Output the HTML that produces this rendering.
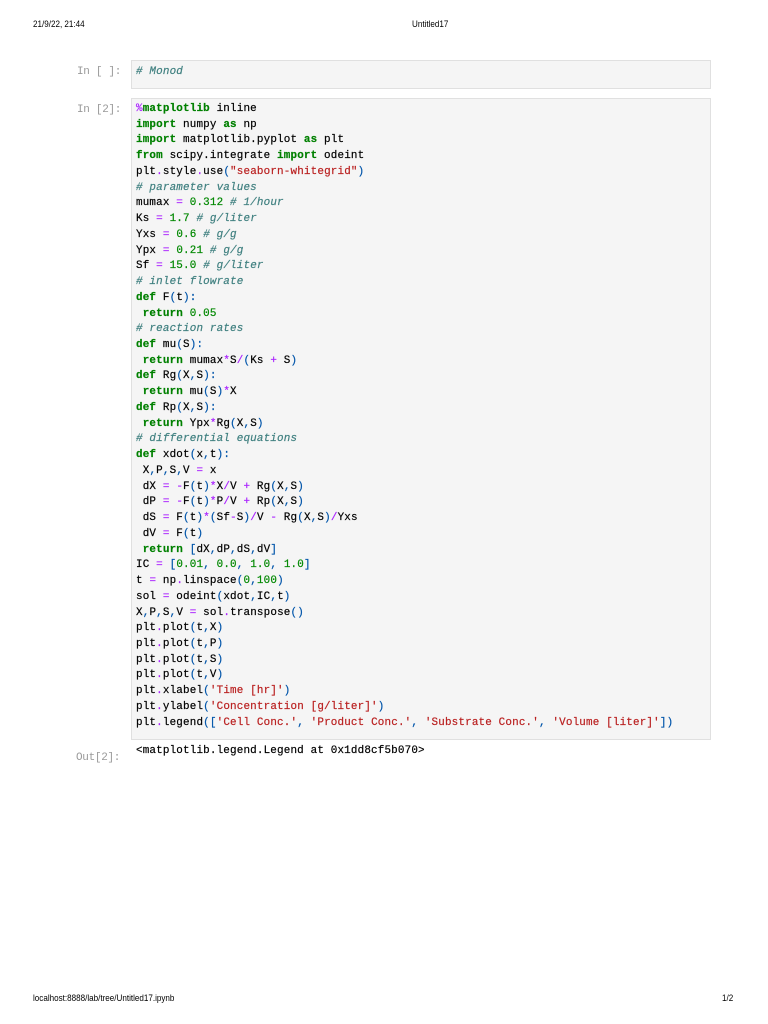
<!DOCTYPE html>
<html><head><meta charset="utf-8"><style>
body{margin:0;width:768px;height:1024px;background:#fff;position:relative;font-family:"Liberation Sans",sans-serif;overflow:hidden}
.hdr{position:absolute;font-size:9.5px;color:#000;transform:scaleX(.85);transform-origin:left}
.box{position:absolute;left:131px;width:578px;background:#f5f5f5;border:1px solid #e0e0e0}
.pr{position:absolute;font-family:"Liberation Mono",monospace;font-size:11px;color:#999;letter-spacing:-0.3px}
pre{margin:0;position:absolute;left:136px;font-family:"Liberation Mono",monospace;font-size:10.9px;letter-spacing:0.18px;line-height:15.74px;color:#000;-webkit-text-stroke:0.2px}
.k{color:#008000;font-weight:bold}.n{color:#008800}.s{color:#BA2121}.c{color:#408080;font-style:italic}.o{color:#AA22FF}.p{color:#0055AA}
</style></head><body>
<div class="hdr" style="left:33px;top:19px">21/9/22, 21:44</div>
<div class="hdr" style="left:412px;top:19px">Untitled17</div>
<div class="box" style="top:60px;height:27px"></div>
<div class="pr" style="left:77px;top:66px">In [ ]:</div>
<pre style="top:65px"><span class="c"># Monod</span></pre>
<div class="box" style="top:98px;height:640px"></div>
<div class="pr" style="left:77px;top:104px">In [2]:</div>
<pre style="top:102px"><span class="o">%</span><span class="k">matplotlib</span> inline
<span class="k">import</span> numpy <span class="k">as</span> np
<span class="k">import</span> matplotlib.pyplot <span class="k">as</span> plt
<span class="k">from</span> scipy.integrate <span class="k">import</span> odeint
plt<span class="o">.</span>style<span class="o">.</span>use<span class="p">(</span><span class="s">"seaborn-whitegrid"</span><span class="p">)</span>
<span class="c"># parameter values</span>
mumax <span class="o">=</span> <span class="n">0.312</span> <span class="c"># 1/hour</span>
Ks <span class="o">=</span> <span class="n">1.7</span> <span class="c"># g/liter</span>
Yxs <span class="o">=</span> <span class="n">0.6</span> <span class="c"># g/g</span>
Ypx <span class="o">=</span> <span class="n">0.21</span> <span class="c"># g/g</span>
Sf <span class="o">=</span> <span class="n">15.0</span> <span class="c"># g/liter</span>
<span class="c"># inlet flowrate</span>
<span class="k">def</span> F<span class="p">(</span>t<span class="p">):</span>
 <span class="k">return</span> <span class="n">0.05</span>
<span class="c"># reaction rates</span>
<span class="k">def</span> mu<span class="p">(</span>S<span class="p">):</span>
 <span class="k">return</span> mumax<span class="o">*</span>S<span class="o">/</span><span class="p">(</span>Ks <span class="o">+</span> S<span class="p">)</span>
<span class="k">def</span> Rg<span class="p">(</span>X<span class="p">,</span>S<span class="p">):</span>
 <span class="k">return</span> mu<span class="p">(</span>S<span class="p">)</span><span class="o">*</span>X
<span class="k">def</span> Rp<span class="p">(</span>X<span class="p">,</span>S<span class="p">):</span>
 <span class="k">return</span> Ypx<span class="o">*</span>Rg<span class="p">(</span>X<span class="p">,</span>S<span class="p">)</span>
<span class="c"># differential equations</span>
<span class="k">def</span> xdot<span class="p">(</span>x<span class="p">,</span>t<span class="p">):</span>
 X<span class="p">,</span>P<span class="p">,</span>S<span class="p">,</span>V <span class="o">=</span> x
 dX <span class="o">=</span> <span class="o">-</span>F<span class="p">(</span>t<span class="p">)</span><span class="o">*</span>X<span class="o">/</span>V <span class="o">+</span> Rg<span class="p">(</span>X<span class="p">,</span>S<span class="p">)</span>
 dP <span class="o">=</span> <span class="o">-</span>F<span class="p">(</span>t<span class="p">)</span><span class="o">*</span>P<span class="o">/</span>V <span class="o">+</span> Rp<span class="p">(</span>X<span class="p">,</span>S<span class="p">)</span>
 dS <span class="o">=</span> F<span class="p">(</span>t<span class="p">)</span><span class="o">*</span><span class="p">(</span>Sf<span class="o">-</span>S<span class="p">)</span><span class="o">/</span>V <span class="o">-</span> Rg<span class="p">(</span>X<span class="p">,</span>S<span class="p">)</span><span class="o">/</span>Yxs
 dV <span class="o">=</span> F<span class="p">(</span>t<span class="p">)</span>
 <span class="k">return</span> <span class="p">[</span>dX<span class="p">,</span>dP<span class="p">,</span>dS<span class="p">,</span>dV<span class="p">]</span>
IC <span class="o">=</span> <span class="p">[</span><span class="n">0.01</span><span class="p">,</span> <span class="n">0.0</span><span class="p">,</span> <span class="n">1.0</span><span class="p">,</span> <span class="n">1.0</span><span class="p">]</span>
t <span class="o">=</span> np<span class="o">.</span>linspace<span class="p">(</span><span class="n">0</span><span class="p">,</span><span class="n">100</span><span class="p">)</span>
sol <span class="o">=</span> odeint<span class="p">(</span>xdot<span class="p">,</span>IC<span class="p">,</span>t<span class="p">)</span>
X<span class="p">,</span>P<span class="p">,</span>S<span class="p">,</span>V <span class="o">=</span> sol<span class="o">.</span>transpose<span class="p">()</span>
plt<span class="o">.</span>plot<span class="p">(</span>t<span class="p">,</span>X<span class="p">)</span>
plt<span class="o">.</span>plot<span class="p">(</span>t<span class="p">,</span>P<span class="p">)</span>
plt<span class="o">.</span>plot<span class="p">(</span>t<span class="p">,</span>S<span class="p">)</span>
plt<span class="o">.</span>plot<span class="p">(</span>t<span class="p">,</span>V<span class="p">)</span>
plt<span class="o">.</span>xlabel<span class="p">(</span><span class="s">'Time [hr]'</span><span class="p">)</span>
plt<span class="o">.</span>ylabel<span class="p">(</span><span class="s">'Concentration [g/liter]'</span><span class="p">)</span>
plt<span class="o">.</span>legend<span class="p">([</span><span class="s">'Cell Conc.'</span><span class="p">,</span> <span class="s">'Product Conc.'</span><span class="p">,</span> <span class="s">'Substrate Conc.'</span><span class="p">,</span> <span class="s">'Volume [liter]'</span><span class="p">])</span></pre>
<div class="pr" style="left:76px;top:752px">Out[2]:</div>
<pre style="top:744px">&lt;matplotlib.legend.Legend at 0x1dd8cf5b070&gt;</pre>
<div class="hdr" style="left:33px;top:993px">localhost:8888/lab/tree/Untitled17.ipynb</div>
<div class="hdr" style="left:722px;top:993px">1/2</div>
</body></html>
